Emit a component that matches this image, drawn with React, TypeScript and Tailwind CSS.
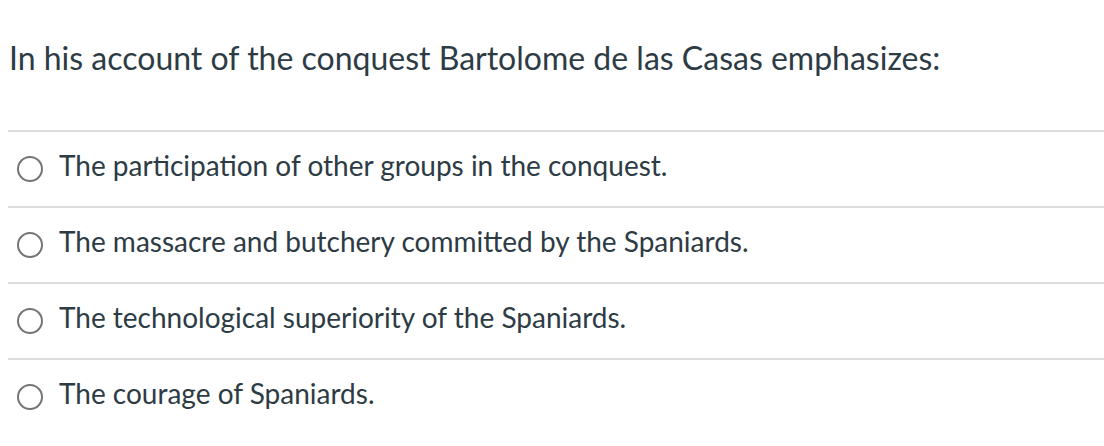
const options = [
  'The participation of other groups in the conquest.',
  'The massacre and butchery committed by the Spaniards.',
  'The technological superiority of the Spaniards.',
  'The courage of Spaniards.',
];

export default function App() {
  return (
    <div className="min-h-screen bg-white text-[#2d3b45] font-['Lato',sans-serif]">
      <div className="pl-[9px] pt-[39px] h-[130px]">
        <h1 className="text-[32px] leading-[38px] font-normal">
          In his account of the conquest Bartolome de las Casas emphasizes:
        </h1>
      </div>
      <div className="ml-2">
        {options.map((text) => (
          <label
            key={text}
            className="flex items-center h-[76px] border-t-2 border-[#dddddd] pl-[9px] cursor-pointer"
          >
            <span className="w-[26px] h-[26px] rounded-full border-2 border-[#757575] shrink-0" />
            <span className="ml-4 text-[28px] leading-[34px] -mt-[8px]">{text}</span>
          </label>
        ))}
      </div>
    </div>
  );
}
